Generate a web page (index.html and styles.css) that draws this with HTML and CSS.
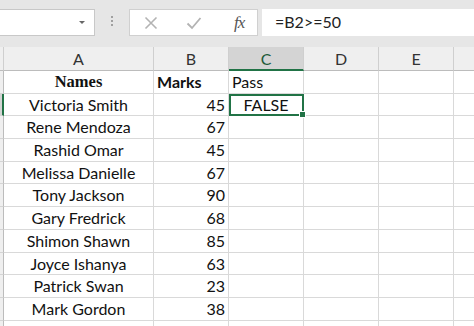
FILE: index.html
```html
<!DOCTYPE html>
<html lang="en">
<head>
  <meta charset="UTF-8">
  <title>Sheet</title>
  <link rel="stylesheet" href="styles.css">
</head>
<body>
  <div class="formula-bar">
    <div class="name-box">
      <span class="drop-arrow"></span>
    </div>
    <div class="grip"><i></i><i></i><i></i></div>
    <div class="fx-buttons">
      <svg class="icon" width="14" height="14" viewBox="0 0 14 14">
        <path d="M1.5 1.5 L12.5 12.5 M12.5 1.5 L1.5 12.5" stroke="#b3b3b3" stroke-width="1.6" fill="none"/>
      </svg>
      <svg class="icon" width="16" height="14" viewBox="0 0 16 14">
        <path d="M1.5 7.5 L6 12 L14.5 2" stroke="#b3b3b3" stroke-width="1.8" fill="none"/>
      </svg>
      <span class="fx">fx</span>
    </div>
    <div class="formula-input">=B2&gt;=50</div>
  </div>

  <div class="sheet">
    <div class="corner"></div>
    <div class="col-head">A</div>
    <div class="col-head">B</div>
    <div class="col-head active">C</div>
    <div class="col-head">D</div>
    <div class="col-head">E</div>
    <div class="col-head last"></div>

    <div class="row-head"></div>
    <div class="cell center serif-bold">Names</div>
    <div class="cell bold">Marks</div>
    <div class="cell">Pass</div>
    <div class="cell"></div><div class="cell"></div><div class="cell last"></div>

    <div class="row-head active"></div>
    <div class="cell center">Victoria Smith</div>
    <div class="cell right">45</div>
    <div class="cell center selected">FALSE<span class="handle"></span></div>
    <div class="cell"></div><div class="cell"></div><div class="cell last"></div>

    <div class="row-head"></div>
    <div class="cell center">Rene Mendoza</div>
    <div class="cell right">67</div>
    <div class="cell"></div><div class="cell"></div><div class="cell"></div><div class="cell last"></div>

    <div class="row-head"></div>
    <div class="cell center">Rashid Omar</div>
    <div class="cell right">45</div>
    <div class="cell"></div><div class="cell"></div><div class="cell"></div><div class="cell last"></div>

    <div class="row-head"></div>
    <div class="cell center">Melissa Danielle</div>
    <div class="cell right">67</div>
    <div class="cell"></div><div class="cell"></div><div class="cell"></div><div class="cell last"></div>

    <div class="row-head"></div>
    <div class="cell center">Tony Jackson</div>
    <div class="cell right">90</div>
    <div class="cell"></div><div class="cell"></div><div class="cell"></div><div class="cell last"></div>

    <div class="row-head"></div>
    <div class="cell center">Gary Fredrick</div>
    <div class="cell right">68</div>
    <div class="cell"></div><div class="cell"></div><div class="cell"></div><div class="cell last"></div>

    <div class="row-head"></div>
    <div class="cell center">Shimon Shawn</div>
    <div class="cell right">85</div>
    <div class="cell"></div><div class="cell"></div><div class="cell"></div><div class="cell last"></div>

    <div class="row-head"></div>
    <div class="cell center">Joyce Ishanya</div>
    <div class="cell right">63</div>
    <div class="cell"></div><div class="cell"></div><div class="cell"></div><div class="cell last"></div>

    <div class="row-head"></div>
    <div class="cell center">Patrick Swan</div>
    <div class="cell right">23</div>
    <div class="cell"></div><div class="cell"></div><div class="cell"></div><div class="cell last"></div>

    <div class="row-head"></div>
    <div class="cell center">Mark Gordon</div>
    <div class="cell right">38</div>
    <div class="cell"></div><div class="cell"></div><div class="cell"></div><div class="cell last"></div>

    <div class="row-head"></div>
    <div class="cell"></div><div class="cell"></div><div class="cell"></div>
    <div class="cell"></div><div class="cell"></div><div class="cell last"></div>
  </div>
</body>
</html>
```

FILE: styles.css
```css
html,
body {
  height: 100%;
}

body {
  margin: 0;
  padding: 0;
  background-color: #e6e6e6;
  font-family: Lato, "Open Sans", sans-serif;
  font-size: 16px;
  color: #111;
  overflow: hidden;
}

.formula-bar {
  display: flex;
  align-items: flex-start;
  height: 46px;
  padding-top: 9px;
  box-sizing: border-box;
}

.name-box {
  position: relative;
  width: 96px;
  height: 27px;
  margin-left: -1px;
  background-color: #fff;
  border: 1px solid #c8c8c8;
  box-sizing: border-box;
}

.drop-arrow {
  position: absolute;
  right: 9px;
  top: 11px;
  border-left: 3px solid transparent;
  border-right: 3px solid transparent;
  border-top: 3px solid #666;
}

.grip {
  display: flex;
  flex-direction: column;
  gap: 2px;
  width: 34px;
  padding-top: 7px;
  align-items: center;
}

.grip i {
  display: block;
  width: 2px;
  height: 2px;
  background-color: #a0a0a0;
}

.fx-buttons {
  display: flex;
  align-items: center;
  width: 129px;
  height: 27px;
  background-color: #fff;
  border: 1px solid #d0d0d0;
  box-sizing: border-box;
  padding-left: 14px;
}

.fx-buttons .icon {
  margin-right: 28px;
}

.fx-buttons .icon + .icon {
  margin-right: 32px;
}

.fx {
  font-family: "Liberation Serif", serif;
  font-style: italic;
  font-size: 17px;
  color: #555;
  letter-spacing: -1px;
}

.formula-input {
  flex: 1;
  height: 27px;
  margin-left: 4px;
  padding-left: 13px;
  background-color: #fff;
  box-sizing: border-box;
  line-height: 26px;
  color: #222;
}

.sheet {
  display: grid;
  grid-template-columns: 4px 150px 75px 75px 75px 75px 1fr;
  grid-template-rows: 24px repeat(11, 22.7px) 8px;
  background-color: #fff;
  margin-top: 1px;
  overflow: hidden;
}

.corner,
.col-head {
  background-color: #efefef;
  border-right: 1px solid #cfcfcf;
  border-bottom: 1px solid #bcbcbc;
  box-sizing: border-box;
}

.col-head {
  text-align: center;
  line-height: 24px;
  color: #333;
}

.col-head.active {
  background-color: #d4d4d4;
  border-bottom: 2px solid #217346;
  color: #1c5a38;
}

.col-head.last,
.cell.last {
  border-right: none;
}

.row-head {
  background-color: #efefef;
  border-right: 1px solid #bcbcbc;
  border-bottom: 1px solid #d4d4d4;
  box-sizing: border-box;
}

.row-head.active {
  background-color: #d4d4d4;
  border-right: 2px solid #217346;
}

.cell {
  position: relative;
  border-right: 1px solid #d9d9d9;
  border-bottom: 1px solid #d9d9d9;
  box-sizing: border-box;
  padding: 0 3px;
  line-height: 22px;
  white-space: nowrap;
  overflow: visible;
}

.center {
  text-align: center;
}

.right {
  text-align: right;
}

.bold {
  font-weight: bold;
}

.serif-bold {
  font-family: "Liberation Serif", serif;
  font-weight: bold;
  font-size: 16.5px;
}

.selected {
  outline: 2px solid #217346;
  outline-offset: -2px;
  z-index: 1;
}

.handle {
  position: absolute;
  right: -3px;
  bottom: -3px;
  width: 5px;
  height: 5px;
  background-color: #217346;
  border: 1px solid #fff;
}
```
